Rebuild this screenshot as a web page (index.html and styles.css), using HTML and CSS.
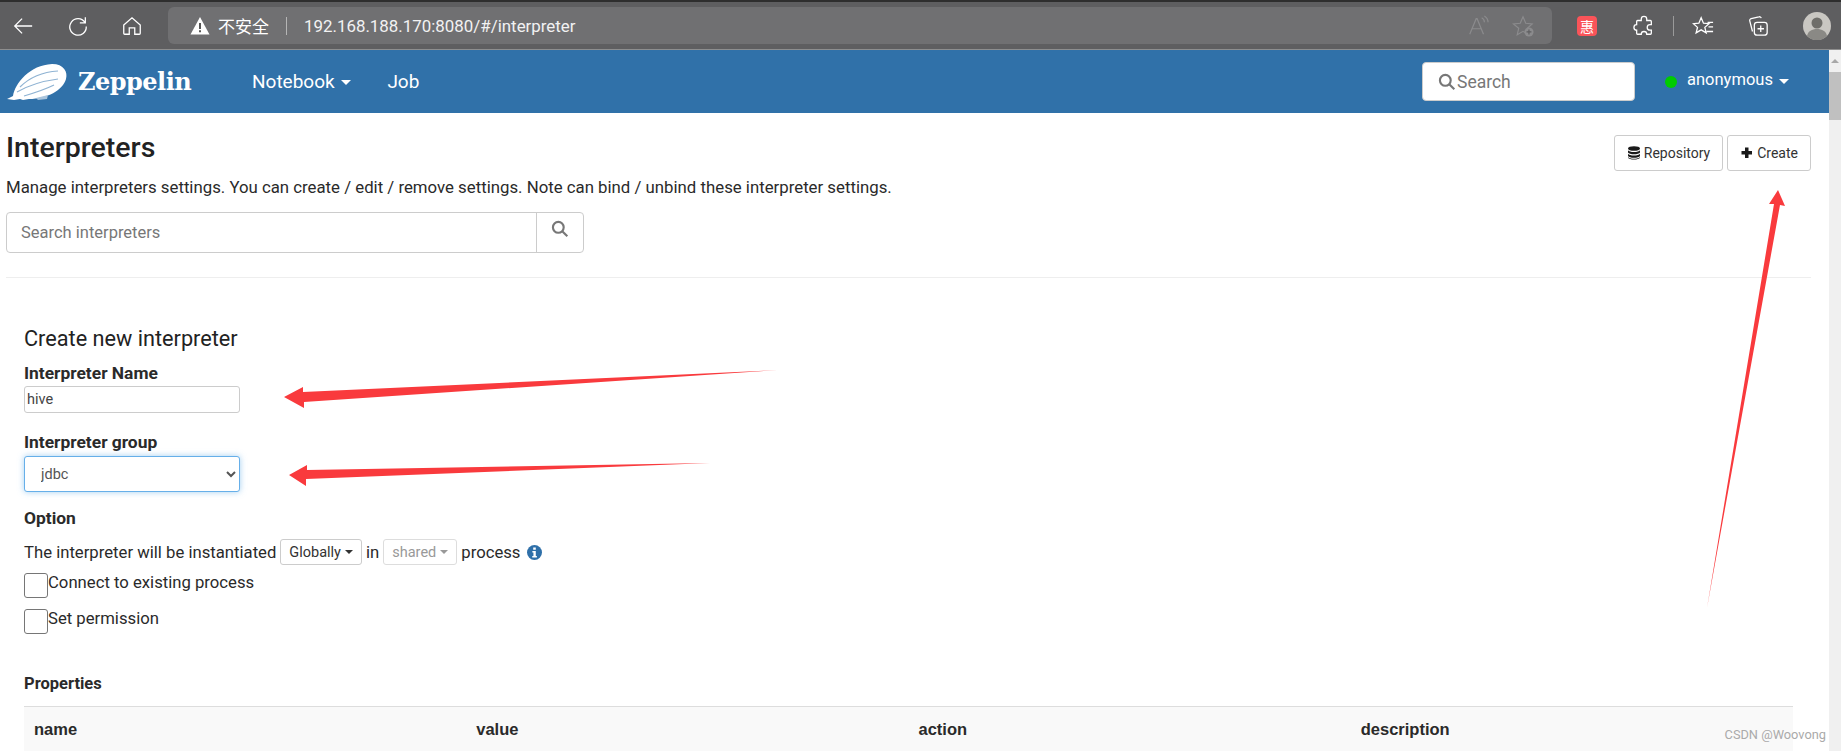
FILE: index.html
```html
<!DOCTYPE html>
<html lang="en">
<head>
    <meta charset="UTF-8">
    <meta name="viewport" content="width=device-width, initial-scale=1.0">
    <title>Zeppelin - Interpreters</title>
    <link rel="stylesheet" href="styles.css">
</head>
<body>

<!-- browser toolbar -->
<div class="browser-bar">
    <svg class="tool-icon back" viewBox="0 0 24 24"><path d="M22 12H3M11 4l-8 8 8 8"/></svg>
    <svg class="tool-icon reload" viewBox="0 0 24 24"><path d="M19.5 8A9 9 0 1 0 21 12.500M20 2.500V8.500H14"/></svg>
    <svg class="tool-icon home" viewBox="0 0 24 24"><path d="M3 11l9-8 9 8v9a1 1 0 0 1-1 1h-5v-7H9v7H4a1 1 0 0 1-1-1z"/></svg>
    <div class="address-bar">
        <svg class="warn" viewBox="0 0 20 20"><path d="M10 1L19.500 18.500H.5z" fill="#fff"/><path d="M9 7h2v6H9zM9 14.300h2v2H9z" fill="#555"/></svg>
        <span class="not-secure">不安全</span>
        <span class="addr-divider"></span>
        <span class="url">192.168.188.170:8080/#/interpreter</span>
        <svg class="addr-icon read-aloud" viewBox="0 0 24 24"><path d="M3 21L10 4h1l7 17M6 15h9M16 3c2 1 3 3 3 5M19 1c3 2 4 4 4 7"/></svg>
        <svg class="addr-icon fav-add" viewBox="0 0 24 24"><path d="M12 2l3 7 7 .7-5.300 4.800 1.600 7-6.300-3.700-6.300 3.700 1.600-7L1.500 9.700 9 9z"/><circle cx="18.500" cy="18.500" r="5" fill="#8b8b8d" stroke="none"/><path d="M18.500 15.800v5.400M15.800 18.500h5.400" stroke="#5f5f61"/></svg>
    </div>
    <div class="ext-badge">惠</div>
    <svg class="tool-icon puzzle" viewBox="0 0 24 24"><path d="M9 4.500a3 3 0 0 1 6 0V6h4a1 1 0 0 1 1 1v3.500h-1.500a3 3 0 0 0 0 6H20V20a1 1 0 0 1-1 1h-4a3 3 0 0 0-6 0H5a1 1 0 0 1-1-1v-3.500a3 3 0 0 1 0-6V7a1 1 0 0 1 1-1h4z"/></svg>
    <span class="bar-divider"></span>
    <svg class="tool-icon favs" viewBox="0 0 24 24"><path d="M10 3l2.500 6 6 .5-4.500 4 1.500 6-5.500-3.300L4.500 19.500l1.500-6-4.500-4 6-.5zM17 8h6M18 13h5M16 18h7"/></svg>
    <svg class="tool-icon collections" viewBox="0 0 24 24"><path d="M6 18L3 6.500a2 2 0 0 1 1.500-2.500L13 2a2 2 0 0 1 2.500 1.500"/><rect x="8" y="8" width="14" height="14" rx="3"/><path d="M15 11.500v7M11.500 15h7"/></svg>
    <svg class="avatar" viewBox="0 0 28 28"><circle cx="14" cy="14" r="14" fill="#c9c7c2"/><circle cx="14" cy="11" r="5.500" fill="#6f6e6a"/><path d="M4 24c1-5 5-7 10-7s9 2 10 7a14 14 0 0 1-20 0z" fill="#8a8985"/></svg>
</div>

<div class="window">
    <div class="page">
        <nav class="navbar">
            <a class="brand">
                <svg class="brand-logo" viewBox="0 0 62 38">
                    <path d="M1 36l6-3C9 20 24 2 46 1c12 0 16 8 14 15-3 11-19 20-37 20l-6 1-3-1-6 1z" fill="#fff"/>
                    <path d="M14 24C24 14 36 9 52 8M11 29c12-7 26-11 41-13M18 33c10-3 20-6 30-11" stroke="#8fb3d3" stroke-width="1.200" fill="none"/>
                    <path d="M30 35l12-3-1 4-9 1z" fill="#a9c4dc"/>
                </svg>
                <span class="brand-name">Zeppelin</span>
            </a>
            <a class="nav-link">Notebook <span class="caret"></span></a>
            <a class="nav-link job">Job</a>
            <div class="nav-search">
                <svg class="search-glyph" viewBox="0 0 16 16"><circle cx="6.500" cy="6.500" r="4.800"/><path d="M10 10l4.500 4.500"/></svg>
                <input type="text" placeholder="Search">
            </div>
            <div class="nav-user">
                <span class="status-dot"></span>
                <span class="user-name">anonymous</span>
                <span class="caret"></span>
            </div>
        </nav>

        <main class="content">
            <div class="head-row">
                <div>
                    <h3 class="page-title">Interpreters</h3>
                    <p class="page-desc">Manage interpreters settings. You can create / edit / remove settings. Note can bind / unbind these interpreter settings.</p>
                    <div class="search-group">
                        <input type="text" placeholder="Search interpreters">
                        <button class="search-btn">
                            <svg class="search-glyph" viewBox="0 0 16 16"><circle cx="6.500" cy="6.500" r="4.800"/><path d="M10 10l4.500 4.500"/></svg>
                        </button>
                    </div>
                </div>
                <div class="head-actions">
                    <button class="btn">
                        <svg class="btn-icon" viewBox="0 0 14 14"><ellipse cx="7" cy="2.500" rx="6" ry="2.300"/><path d="M1 4.200c1 2.400 11 2.400 12 0v2.200c-1 2.400-11 2.400-12 0zM1 7.700c1 2.400 11 2.400 12 0v2.200c-1 2.400-11 2.400-12 0zM1 11c1 2.400 11 2.400 12 0v.8c-1 2.400-11 2.400-12 0z"/></svg>
                        Repository
                    </button>
                    <button class="btn">
                        <svg class="btn-icon" viewBox="0 0 14 14"><path d="M5 1.500h3.500V5H12v3.500H8.500V12H5V8.500H1.500V5H5z"/></svg>
                        Create
                    </button>
                </div>
            </div>

            <hr class="rule">

            <section class="create-form">
                <h4 class="form-title">Create new interpreter</h4>

                <label class="field-label">Interpreter Name</label>
                <input class="name-input" type="text" value="hive">

                <label class="field-label group-label">Interpreter group</label>
                <select class="group-select">
                    <option>jdbc</option>
                </select>

                <label class="field-label option-label">Option</label>
                <div class="option-row">
                    The interpreter will be instantiated
                    <span class="mini-btn">Globally <span class="caret small"></span></span>
                    in
                    <span class="mini-btn muted">shared <span class="caret small"></span></span>
                    process
                    <svg class="info-icon" viewBox="0 0 14 14"><circle cx="7" cy="7" r="7" fill="#2f70a9"/><path d="M5.800 2.300h2.400v2.100H5.800zM5 5.500h3.200v4.700H9.200v1.500H4.900v-1.500H6V7H5z" fill="#fff"/></svg>
                </div>
                <label class="check-row"><input type="checkbox">Connect to existing process</label>
                <label class="check-row"><input type="checkbox">Set permission</label>

                <label class="field-label props-label">Properties</label>
                <table class="props-table">
                    <thead>
                        <tr>
                            <th>name</th>
                            <th>value</th>
                            <th>action</th>
                            <th>description</th>
                        </tr>
                    </thead>
                </table>
            </section>
        </main>
    </div>

    <div class="scrollbar">
        <span class="scroll-arrow"></span>
        <span class="scroll-thumb"></span>
    </div>
</div>

<!-- red arrows drawn on top of the screenshot -->
<svg class="annotations" viewBox="0 0 1841 751">
    <path d="M284 397l19-10 0 5L778 370 304 402l0 6z"/>
    <path d="M289 475l18-10 0 5L710 463 306 479l0 7z"/>
    <path d="M1778 190l7 16-5-1-73 403 67-404-5 0z"/>
</svg>

<div class="watermark">CSDN @Woovong</div>

</body>
</html>
```

FILE: styles.css
```css
* {
    box-sizing: border-box;
}

html, body {
    margin: 0;
    height: 751px;
    overflow: hidden;
}

body {
    font-family: Roboto, "Liberation Sans", sans-serif;
    font-size: 19px;
    color: #2a2a2a;
    background: #fff;
}

/* Browser toolbar */
.browser-bar {
    height: 50px;
    display: flex;
    align-items: center;
    background: #5e5e60;
    border-top: 2px solid #2e2e2e;
    border-bottom: 1px solid #8e8e8e;
    padding-left: 12px;
}

.tool-icon {
    width: 22px;
    height: 22px;
    fill: none;
    stroke: #fff;
    stroke-width: 1.4;
    flex: none;
}

.reload {
    margin-left: 33px;
}

.home {
    margin-left: 32px;
}

.address-bar {
    width: 1384px;
    height: 37px;
    margin-left: 25px;
    border-radius: 6px;
    background: #707072;
    display: flex;
    align-items: center;
    padding: 0 18px 0 22px;
    color: #fff;
    flex: none;
}

.warn {
    width: 20px;
    height: 20px;
}

.not-secure {
    margin-left: 8px;
    font-family: "Noto Sans CJK SC", sans-serif;
    font-size: 17px;
}

.addr-divider {
    width: 1px;
    height: 18px;
    background: #b5b5b5;
    margin: 0 17px 0 17px;
}

.url {
    font-size: 16.900px;
    color: #f2f2f2;
}

.addr-icon {
    width: 22px;
    height: 22px;
    fill: none;
    stroke: #8b8b8d;
    stroke-width: 1.3;
}

.read-aloud {
    margin-left: auto;
}

.fav-add {
    margin-left: 23px;
}

.ext-badge {
    width: 20px;
    height: 20px;
    margin-left: 25px;
    border-radius: 4px;
    background: #fa5459;
    color: #fff;
    font-family: "Noto Sans CJK SC", sans-serif;
    font-size: 14px;
    line-height: 20px;
    text-align: center;
    flex: none;
}

.puzzle {
    margin-left: 36px;
}

.bar-divider {
    width: 1px;
    height: 20px;
    background: #9a9a9a;
    margin: 0 18px 0 18px;
}

.collections {
    margin-left: 33px;
}

.avatar {
    width: 28px;
    height: 28px;
    margin-left: 34px;
    flex: none;
}

/* Page and scrollbar */
.window {
    display: flex;
    height: 701px;
}

.page {
    flex: 1;
    min-width: 0;
}

.scrollbar {
    width: 12px;
    background: #f0f0f0;
    padding-top: 9px;
    display: flex;
    flex-direction: column;
    align-items: center;
}

.scroll-arrow {
    border-left: 4px solid transparent;
    border-right: 4px solid transparent;
    border-bottom: 4px solid #a8a8a8;
}

.scroll-thumb {
    width: 12px;
    height: 48px;
    margin-top: 9px;
    background: #c0c0c0;
}

/* Navbar */
.navbar {
    height: 63px;
    background: #3071a9;
    display: flex;
    align-items: center;
    color: #fff;
}

.brand {
    display: flex;
    align-items: center;
    padding-left: 6px;
    width: 252px;
}

.brand-logo {
    width: 62px;
    height: 38px;
}

.brand-name {
    margin-left: 10px;
    font-family: "DejaVu Serif", serif;
    font-weight: bold;
    font-size: 24px;
    letter-spacing: -.5px;
}

.nav-link {
    display: block;
}

.job {
    margin-left: 36px;
}

.caret {
    display: inline-block;
    width: 0;
    height: 0;
    margin-left: 2px;
    vertical-align: middle;
    border-top: 5px solid;
    border-left: 5px solid transparent;
    border-right: 5px solid transparent;
}

.caret.small {
    border-top-width: 4px;
    border-left-width: 4px;
    border-right-width: 4px;
    margin-left: 0;
}

.nav-search {
    width: 213px;
    height: 39px;
    margin-left: auto;
    display: flex;
    align-items: center;
    padding-left: 15px;
    background: #fff;
    border: 1px solid #ccc;
    border-radius: 4px;
    font-size: 17.500px;
}

.nav-search input {
    border: none;
    outline: none;
    width: 160px;
    margin-left: 1px;
    padding: 0;
    font: inherit;
    color: #555;
}

input::placeholder {
    color: #777;
}

.search-glyph {
    width: 18px;
    height: 18px;
    fill: none;
    stroke: #777;
    stroke-width: 1.9;
    flex: none;
}

.nav-user {
    display: flex;
    align-items: center;
    gap: 8px;
    width: 194px;
    padding-left: 30px;
    font-size: 16.500px;
}

.nav-user .caret {
    margin-left: -2px;
}

.user-name {
    margin: -4px 0 0 -2px;
}

.status-dot {
    width: 12px;
    height: 12px;
    margin-right: 4px;
    border-radius: 50%;
    background: #00cc00;
}

/* Content */
.content {
    padding: 0 18px 0 6px;
}

.head-row {
    display: flex;
    justify-content: space-between;
}

.page-title {
    margin: 17px 0 0;
    font-size: 28.500px;
    line-height: 36px;
    font-weight: 500;
    color: #222;
}

.page-desc {
    margin: 9px 0 0;
    font-size: 16.800px;
    line-height: 24px;
}

.search-group {
    display: flex;
    width: 578px;
    height: 41px;
    margin-top: 13px;
    border: 1px solid #ccc;
    border-radius: 4px;
}

.search-group input {
    flex: 1;
    border: none;
    outline: none;
    padding: 0 14px;
    background: none;
    font-family: inherit;
    font-size: 16.500px;
}

.search-btn {
    width: 47px;
    border: none;
    border-left: 1px solid #ccc;
    background: none;
    padding: 0 0 4px;
}

.head-actions {
    display: flex;
    gap: 4px;
    margin-top: 22px;
    align-items: flex-start;
}

.btn {
    height: 36px;
    padding: 0 12px;
    background: #fff;
    border: 1px solid #ccc;
    border-radius: 3px;
    font-family: inherit;
    font-size: 14px;
    color: #333;
    display: flex;
    align-items: center;
    gap: 3px;
}

.btn-icon {
    width: 14px;
    height: 14px;
    fill: #1a1a1a;
}

.rule {
    margin: 24px 0 0;
    border: none;
    border-top: 1px solid #eee;
}

.create-form {
    padding: 48px 0 0 18px;
}

.form-title {
    margin: 0;
    font-size: 21.700px;
    line-height: 26px;
    font-weight: 400;
    color: #222;
}

.field-label {
    display: block;
    margin: 9px 0 0;
    font-size: 17.400px;
    line-height: 24px;
    font-weight: 700;
}

.name-input {
    display: block;
    width: 216px;
    height: 27px;
    margin-top: 1px;
    padding: 0 2px;
    border: 1px solid #ccc;
    border-radius: 3px;
    font-family: inherit;
    font-size: 14.500px;
    color: #444;
}

.group-label {
    margin-top: 17px;
}

.group-select {
    display: block;
    width: 216px;
    height: 36px;
    margin-top: 2px;
    padding: 0 12px;
    background: #fff;
    border: 1px solid #66afe9;
    border-radius: 3px;
    box-shadow: 0 0 6px rgba(102, 175, 233, .6);
    outline: none;
    font-family: inherit;
    font-size: 14.500px;
    color: #555;
}

.option-label {
    margin-top: 14px;
}

.option-row {
    display: flex;
    align-items: center;
    gap: 4px;
    height: 28px;
    margin-top: 8px;
    font-size: 16.700px;
}

.mini-btn {
    display: inline-flex;
    align-items: center;
    gap: 4px;
    height: 26px;
    padding: 0 8px;
    border: 1px solid #ccc;
    border-radius: 3px;
    font-size: 14.500px;
    color: #333;
}

.mini-btn.muted {
    border-color: #ddd;
    color: #999;
}

.info-icon {
    width: 15px;
    height: 15px;
    margin-left: 3px;
}

.check-row {
    display: flex;
    align-items: flex-start;
    height: 25px;
    margin-bottom: 11px;
    font-size: 16.700px;
    line-height: 20px;
}

.check-row input {
    appearance: none;
    width: 24px;
    height: 25px;
    margin: 0;
    border: 1px solid #767676;
    border-radius: 3px;
    background: #fff;
}

.option-row + .check-row {
    margin-top: 7px;
}

.props-label {
    margin-top: 38px;
    font-size: 16.500px;
}

.props-table {
    width: 1769px;
    margin-top: 10px;
    border-collapse: collapse;
    table-layout: fixed;
}

.props-table th {
    height: 45px;
    padding: 0 10px;
    background: #f9f9f9;
    border-top: 1px solid #ddd;
    border-bottom: 1px solid #ddd;
    text-align: left;
    font-family: "Liberation Sans", sans-serif;
    font-size: 16.500px;
}

/* Overlays */
.annotations {
    position: absolute;
    top: 0;
    left: 0;
    width: 1841px;
    height: 751px;
    fill: #f93a3d;
    pointer-events: none;
}

.watermark {
    position: absolute;
    right: 15px;
    top: 727px;
    font-size: 12.800px;
    color: #aaa;
}
```
